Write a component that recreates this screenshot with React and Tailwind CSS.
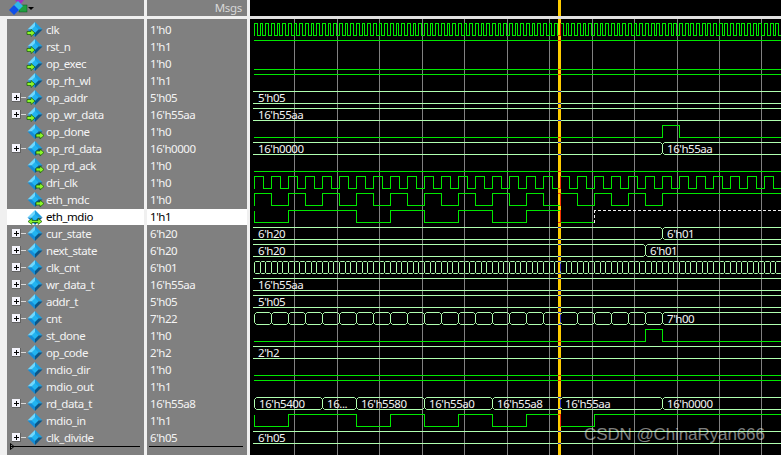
const font = { fontFamily: '"Noto Sans", Tahoma, sans-serif' };

// name, value, port direction, expandable
const signals = [
  ['clk', "1'h0", 'in', false],
  ['rst_n', "1'h1", 'in', false],
  ['op_exec', "1'h0", 'in', false],
  ['op_rh_wl', "1'h1", 'in', false],
  ['op_addr', "5'h05", 'in', true],
  ['op_wr_data', "16'h55aa", 'in', true],
  ['op_done', "1'h0", 'out', false],
  ['op_rd_data', "16'h0000", 'out', true],
  ['op_rd_ack', "1'h0", 'out', false],
  ['dri_clk', "1'h0", 'out', false],
  ['eth_mdc', "1'h0", 'out', false],
  ['eth_mdio', "1'h1", 'inout', false],
  ['cur_state', "6'h20", null, true],
  ['next_state', "6'h20", null, true],
  ['clk_cnt', "6'h01", null, true],
  ['wr_data_t', "16'h55aa", null, true],
  ['addr_t', "5'h05", null, true],
  ['cnt', "7'h22", null, true],
  ['st_done', "1'h0", null, false],
  ['op_code', "2'h2", null, true],
  ['mdio_dir', "1'h0", null, false],
  ['mdio_out', "1'h1", null, false],
  ['rd_data_t', "16'h55a8", null, true],
  ['mdio_in', "1'h1", null, false],
  ['clk_divide', "6'h05", null, true],
];

const BIT = '#00e800';
const BUS = '#b0ffb0';
const hi = (k) => 23.5 + 17 * k;
const lo = (k) => 35.5 + 17 * k;
const snap = (x) => Math.round(x) + 0.5;

function range(start, end, step) {
  const out = [];
  for (let x = start; x < end; x += step) out.push(x);
  return out;
}

function Bit({ k, high, toggles = [], lead = false }) {
  let level = high;
  let d = lead
    ? `M254.5 ${level ? lo(k) : hi(k)}V${level ? hi(k) : lo(k)}`
    : `M254 ${level ? hi(k) : lo(k)}`;
  toggles.forEach((x) => {
    level = !level;
    d += `H${snap(x)}V${level ? hi(k) : lo(k)}`;
  });
  d += 'H781';
  return <path d={d} stroke={BIT} fill="none" shapeRendering="crispEdges" />;
}

function Bus({ k, changes = [], labels = [], dx = 2, dy = 2 }) {
  const t = hi(k);
  const b = lo(k);
  const xs = changes.map(snap);
  let d = '';
  let from = 253;
  xs.forEach((x) => {
    if (x > 256) {
      d += `M${from} ${t}H${x - dx}L${x} ${t + dy}V${b - dy}L${x - dx} ${b}H${from}`;
    } else {
      d += `M${x} ${t + dy}V${b - dy}`;
    }
    d += `M${x} ${t + dy}L${x + dx} ${t}M${x} ${b - dy}L${x + dx} ${b}`;
    from = x + dx;
  });
  d += `M${from} ${t}H781M${from} ${b}H781`;
  return (
    <g>
      <path d={d} stroke={BUS} fill="none" />
      {labels.map(([x, text]) => (
        <text key={x} x={x} y={b - 2} fill="#f4f4f4" fontSize="11.5" letterSpacing="-0.45" style={font}>{text}</text>
      ))}
    </g>
  );
}

function Diamond({ kind }) {
  return (
    <svg width="20" height="17" viewBox="0 0 20 17" className="shrink-0">
      <path d="M9 1L1.5 8.5H9Z" fill="#6fd8ff" />
      <path d="M9 1L16.5 8.5H9Z" fill="#1c9fe0" />
      <path d="M1.5 8.5L9 16V8.5Z" fill="#148cd6" />
      <path d="M16.5 8.5L9 16V8.5Z" fill="#0a5688" />
      <path d="M9 5L12.5 8.5L9 12L5.5 8.5Z" fill="#22b4f0" />
      {kind === 'in' && <path d="M1 10.5H5V8.5L9 12L5 15.5V13.5H1Z" fill="#8cf52a" stroke="#165a0a" strokeWidth="0.7" />}
      {kind === 'out' && <path d="M10 11H14V9L18 12.5L14 16V14H10Z" fill="#8cf52a" stroke="#165a0a" strokeWidth="0.7" />}
      {kind === 'inout' && <path d="M2 12.5L6 9.5V11.5H12V9.5L16 12.5L12 15.5V13.5H6V15.5Z" fill="#8cf52a" stroke="#165a0a" strokeWidth="0.7" />}
    </svg>
  );
}

function Expander() {
  return (
    <div className="flex items-center shrink-0 w-[14px] -ml-px">
      <div className="flex items-center justify-center w-[9px] h-[9px] shrink-0 bg-[#f4f4fc] border-r border-b border-[#606060]">
        <svg width="5" height="5" viewBox="0 0 5 5"><path d="M0 2.5H5M2.5 0V5" stroke="#000" /></svg>
      </div>
      <div className="w-[5px] h-px bg-[#d8d8d8]" />
    </div>
  );
}

function NameRow({ name, kind, open, selected }) {
  return (
    <div className={`flex items-center h-[17px] pl-[6px] ${selected ? 'bg-white text-black border-t border-[#808080]' : 'text-[#f4f4f4]'}`}>
      {open ? <Expander /> : <div className="w-[13px] shrink-0" />}
      <div className="w-[20px] shrink-0"><Diamond kind={kind} /></div>
      <span className="text-[11.5px] tracking-[-0.45px] leading-none whitespace-nowrap">{name}</span>
    </div>
  );
}

function Waves() {
  const grid = [294, 337, 379, 422, 464, 507, 549, 592, 634, 677, 719, 761];
  const busRows = [4, 5, 7, 12, 13, 14, 15, 16, 17, 19, 22, 24];
  const clkEdges = range(254 + 17 / 6, 781, 17 / 6);
  const driEdges = range(262.7, 781, 8.5);
  const mdcEdges = range(271, 650, 34).flatMap((x) => [x, x + 17]);
  const mdioEdges = [288, 356, 390, 424, 458, 492, 526, 560, 594];

  return (
    <svg width="531" height="455" viewBox="250 0 531 455" className="block shrink-0">
      {grid.map((x) => (
        <path key={x} d={`M${x + 0.5} 19V455`} stroke="#808080" />
      ))}
      <rect x="558" y="0" width="3" height="455" fill="#ffcc00" />
      <rect x="250" y="16" width="531" height="3" fill="#e0e0e0" />

      <Bit k={0} high lead toggles={clkEdges} />
      <Bit k={1} high />
      <Bit k={2} />
      <Bit k={3} high />
      <Bus k={4} labels={[[258, "5'h05"]]} />
      <Bus k={5} labels={[[258, "16'h55aa"]]} />
      <Bit k={6} toggles={[662, 679]} />
      <Bus k={7} changes={[662]} labels={[[258, "16'h0000"], [667, "16'h55aa"]]} />
      <Bit k={8} />
      <Bit k={9} high lead toggles={driEdges} />
      <Bit k={10} high lead toggles={mdcEdges} />
      <path d={`M254.5 ${hi(11)}V${lo(11)}H288.5V${hi(11)}H356.5V${lo(11)}H390.5V${hi(11)}H424.5V${lo(11)}H458.5V${hi(11)}H492.5V${lo(11)}H526.5V${hi(11)}H560.5V${lo(11)}H594`} stroke={BIT} fill="none" shapeRendering="crispEdges" />
      <path d={`M594.5 ${lo(11)}V${hi(11)}H781`} stroke="#f0f0f0" strokeDasharray="3 2" fill="none" shapeRendering="crispEdges" />
      <Bus k={12} changes={[662]} labels={[[258, "6'h20"], [667, "6'h01"]]} />
      <Bus k={13} changes={[645]} labels={[[258, "6'h20"], [650, "6'h01"]]} />
      <Bus k={14} dx={1} dy={1} changes={range(254, 781, 17 / 3)} />
      <Bus k={15} labels={[[258, "16'h55aa"]]} />
      <Bus k={16} labels={[[258, "5'h05"]]} />
      <Bus k={17} changes={[254, ...range(271, 670, 17)]} labels={[[667, "7'h00"]]} />
      <Bit k={18} toggles={[645, 662]} />
      <Bus k={19} labels={[[258, "2'h2"]]} />
      <Bit k={20} />
      <Bit k={21} high />
      <Bus
        k={22}
        changes={[254, 322, 356, 424, 492, 560, 662]}
        labels={[[259, "16'h5400"], [327, '16...'], [361, "16'h5580"], [429, "16'h55a0"], [497, "16'h55a8"], [565, "16'h55aa"], [667, "16'h0000"]]}
      />
      <Bit k={23} lead toggles={mdioEdges} />
      <Bus k={24} labels={[[258, "6'h05"]]} />

      {/* cursor crossings */}
      {[35.5, 40.5, 69.5, 74.5, 137.5, 171.5, 188.5, 193.5, 222.5, 341.5, 375.5, 380.5, 414.5].map((y) => (
        <path key={y} d={`M558 ${y}H561`} stroke="#f03000" />
      ))}
      {busRows.flatMap((k) => [hi(k), lo(k)]).map((y) => (
        <path key={y} d={`M558 ${y}H561`} stroke="#3030c0" />
      ))}
      {[[23, 36], [176, 189], [193, 206], [210, 223], [414, 427]].map(([a, b]) => (
        <path key={a} d={`M560.5 ${a}V${b}`} stroke="#f03000" />
      ))}
      {[14, 17, 22].map((k) => (
        <path key={k} d={`M560.5 ${hi(k) + 2}V${lo(k) - 2}`} stroke="#3030c0" />
      ))}
    </svg>
  );
}

export default function App() {
  return (
    <div className="relative flex w-[781px] h-[455px] overflow-hidden bg-black" style={font}>
      <div className="flex flex-col w-[250px] shrink-0 bg-[#f0f0f0]">
        {/* header */}
        <div className="flex h-[16px] bg-[#808080]">
          <div className="flex items-center w-[144px] pl-[8px]">
            <svg width="26" height="16" viewBox="0 0 26 16">
              <path d="M7 0H16L12 5Z" fill="#a030c0" />
              <rect x="11" y="5" width="8" height="7" fill="#20a040" stroke="#0a5020" strokeWidth="0.5" />
              <path d="M10 1L15 6L10 11L5 6Z" fill="#30b8e8" />
              <path d="M6 5L11 10L6 15L1 10Z" fill="#1050e8" />
              <path d="M20 7H26L23 10Z" fill="#000" />
            </svg>
          </div>
          <div className="w-[3px] bg-[#f0f0f0]" />
          <div className="flex items-center justify-end w-[100px] pr-[5px] text-[11.5px] tracking-[-0.3px] leading-none text-[#d8d8d8]">Msgs</div>
          <div className="w-[3px] bg-[#f0f0f0]" />
        </div>
        <div className="h-[3px]" />

        {/* signal names and values */}
        <div className="flex flex-1 pl-[7px]">
          <div className="relative w-[137px] bg-[#808080] pt-[2px]">
            {signals.map(([name, , kind, open], k) => (
              <NameRow key={name} name={name} kind={kind} open={open} selected={k === 11} />
            ))}
            <div className="ml-[3px] w-[130px] h-px bg-black" />
            <svg width="5" height="7" viewBox="0 0 5 7" className="absolute left-[3px] top-[424px]">
              <path d="M0.5 0.5L4 3.5L0.5 6.5Z" fill="none" stroke="#000" />
            </svg>
          </div>
          <div className="w-[3px]" />
          <div className="w-[100px] bg-[#808080] pt-[2px]">
            {signals.map(([name, value], k) => (
              <div key={name} className={`flex items-center h-[17px] pl-[3px] text-[11.5px] tracking-[-0.45px] leading-none ${k === 11 ? 'bg-white text-black border-t border-[#808080]' : 'text-[#f4f4f4]'}`}>
                {value}
              </div>
            ))}
            <div className="ml-[2px] w-[94px] h-px bg-black" />
          </div>
          <div className="w-[3px]" />
        </div>
      </div>

      <Waves />

      <div className="absolute left-[584px] top-[423px] text-[17px] tracking-[-0.1px] leading-[24px] text-white/50 whitespace-nowrap" style={{ fontFamily: '"Liberation Sans", sans-serif' }}>
        CSDN @ChinaRyan666
      </div>
    </div>
  );
}
